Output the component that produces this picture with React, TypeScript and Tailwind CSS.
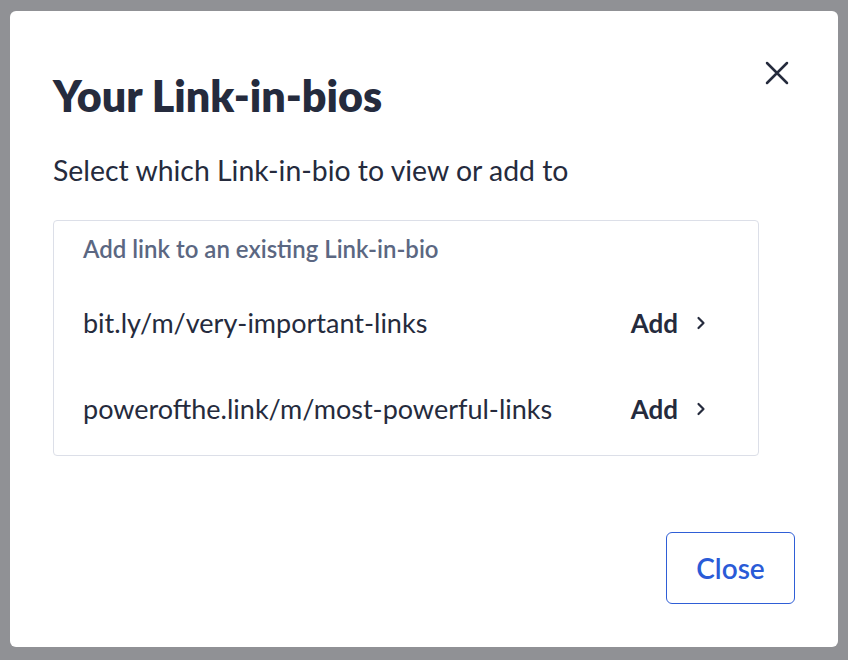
import React from 'react';

const links = ['bit.ly/m/very-important-links', 'powerofthe.link/m/most-powerful-links'];

const ChevronRight = () => (
    <svg width="14" height="14" viewBox="0 0 14 14" fill="none" className="text-[#252b3d]">
        <path d="M4.5 2 9.5 7 4.5 12" stroke="currentColor" strokeWidth="2.2" strokeLinecap="round" strokeLinejoin="round" />
    </svg>
);

export default function App() {
    return (
        <div className="flex h-[660px] w-[848px] items-start justify-center bg-[#909195] pt-[11px] font-['Lato','Open_Sans',sans-serif]">
            <div className="relative flex h-[636px] w-[828px] flex-col rounded-[6px] bg-white px-[43px] pt-[59px] pb-[43px]">
                <button className="absolute top-[50px] right-[49px] text-[#252b3d]">
                    <svg width="24" height="24" viewBox="0 0 24 24" fill="none">
                        <path d="M2 2 22 22M22 2 2 22" stroke="currentColor" strokeWidth="2.5" strokeLinecap="round" />
                    </svg>
                </button>
                <h1 className="text-[43px] leading-[52px] font-extrabold text-[#252b3d]">Your Link-in-bios</h1>
                <p className="mt-[32px] text-[28.4px] leading-[32px] text-[#252b3d]">
                    Select which Link-in-bio to view or add to
                </p>
                <div className="mt-[34px] w-[706px] rounded-[4px] border border-[#dcdfe8] pt-[14px] pb-[3px]">
                    <div className="px-[29px] text-[24px] leading-[28px] font-semibold text-[#5b6782]">
                        Add link to an existing Link-in-bio
                    </div>
                    <div className="mt-[17px] flex flex-col">
                        {links.map((link) => (
                            <div key={link} className="flex h-[86px] items-center justify-between pr-[50px] pl-[29px]">
                                <span className="text-[27px] text-[#252b3d]">{link}</span>
                                <span className="flex items-center gap-[16px] text-[26px] font-bold text-[#252b3d]">
                                    Add
                                    <ChevronRight />
                                </span>
                            </div>
                        ))}
                    </div>
                </div>
                <div className="mt-auto flex justify-end">
                    <button className="flex h-[72px] w-[129px] items-center justify-center rounded-[6px] border border-[#2f5ed6] text-[28px] font-semibold text-[#2a5bd7]">
                        Close
                    </button>
                </div>
            </div>
        </div>
    );
}
